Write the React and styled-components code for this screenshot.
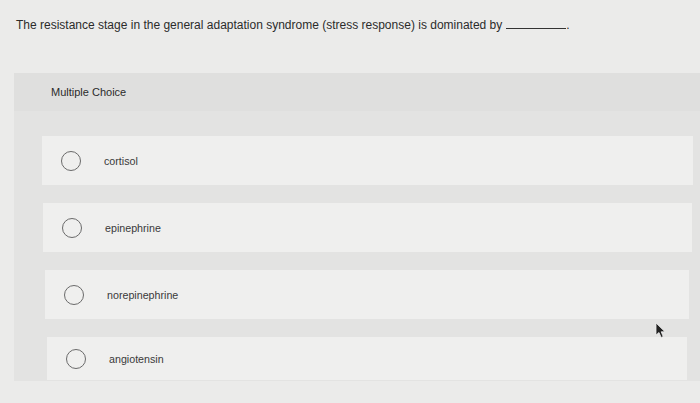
import React from "react";
import styled, { createGlobalStyle } from "styled-components";

const Global = createGlobalStyle`
  html, body { margin: 0; padding: 0; background: #ebebea; }
  body { font-family: "Liberation Sans", Arial, sans-serif; color: #2a2a2a; }
`;

const Page = styled.div`
  position: relative;
  width: 700px;
  height: 403px;
  overflow: hidden;
  background: #ebebea;
`;

const Question = styled.p`
  margin: 0;
  padding: 16px 0 0 16px;
  font-size: 12px;
  line-height: 16px;
  color: #2b2b2b;
`;

const Blank = styled.span`
  display: inline-block;
  width: 60px;
  border-bottom: 1px solid #333;
  margin-left: 4px;
  height: 12px;
  vertical-align: baseline;
`;

const Panel = styled.section`
  margin: 40px 0 0 14px;
  background: #e3e3e2;
  padding-bottom: 1px;
  width: 686px;
`;

const Header = styled.div`
  background: #dfdfde;
  height: 38px;
  display: flex;
  align-items: center;
  padding-left: 37px;
  font-size: 11px;
  color: #2b2b2b;
`;

const List = styled.div`
  display: flex;
  flex-direction: column;
  gap: 18px;
  padding: 25px 0 0 28px;
`;

const Option = styled.label`
  display: flex;
  align-items: center;
  height: ${(p) => p.h}px;
  background: #efefee;
  margin-left: ${(p) => p.shift}px;
  margin-right: ${(p) => 7 + p.shift * 1.3}px;
  padding-left: ${(p) => 19}px;
  font-size: 10.7px;
  color: #3a3a3a;
`;

const Radio = styled.span`
  width: 18px;
  height: 18px;
  border: 1.2px solid #6a6a6a;
  border-radius: 50%;
  flex: none;
  margin-right: 23px;
`;

const Cursor = styled.svg`
  position: absolute;
  left: 655px;
  top: 322px;
`;

const options = [
  { t: "cortisol", h: 49, s: 0 },
  { t: "epinephrine", h: 49, s: 1 },
  { t: "norepinephrine", h: 49, s: 3 },
  { t: "angiotensin", h: 43, s: 5 },
];

export default function App() {
  return (
    <Page>
      <Global />
      <Question>
        The resistance stage in the general adaptation syndrome (stress response) is dominated by
        <Blank />.
      </Question>
      <Panel>
        <Header>Multiple Choice</Header>
        <List>
          {options.map((o) => (
            <Option key={o.t} h={o.h} shift={o.s}>
              <Radio />
              {o.t}
            </Option>
          ))}
        </List>
      </Panel>
      <Cursor width="12" height="18" viewBox="0 0 12 18">
        <path d="M1 1 L1 13 L4 10.5 L6.2 15.5 L8.2 14.6 L6.2 9.8 L10 9.8 Z" fill="#222" stroke="#eee" strokeWidth="0.8" />
      </Cursor>
    </Page>
  );
}
